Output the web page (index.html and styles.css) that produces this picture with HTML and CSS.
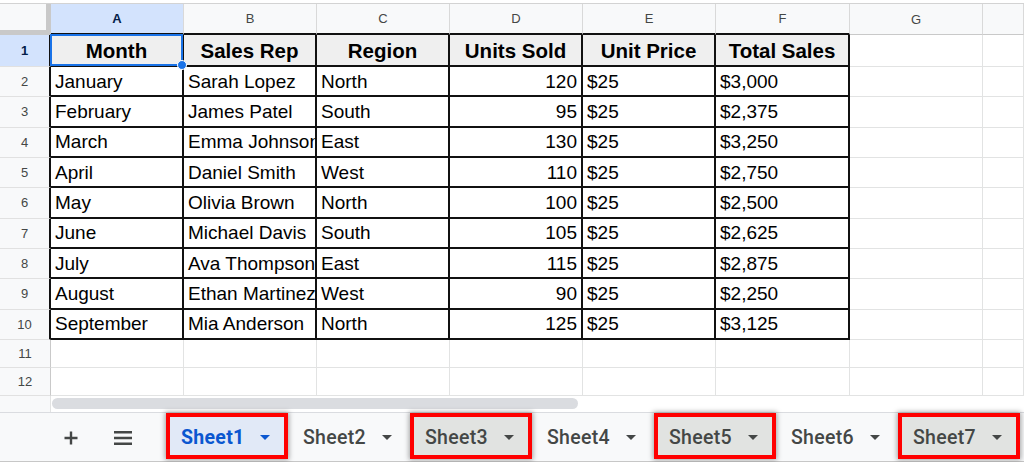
FILE: index.html
```html
<!DOCTYPE html>
<html lang="en">
<head>
<meta charset="utf-8">
<title>Sales Sheet</title>
<link rel="stylesheet" href="styles.css">
</head>
<body>
<div class="app">
  <div class="sheet">
    <div class="corner"></div>
    <div class="ch ct selcol">A</div>
    <div class="ch ct">B</div>
    <div class="ch ct">C</div>
    <div class="ch ct">D</div>
    <div class="ch ct">E</div>
    <div class="ch ct">F</div>
    <div class="ch">G</div>
    <div class="ch"></div>

    <div class="rh rt selrow">1</div>
    <div class="c t hd a1">Month<span class="sel"><span class="dot"></span></span></div>
    <div class="c t hd">Sales Rep</div>
    <div class="c t hd">Region</div>
    <div class="c t hd">Units Sold</div>
    <div class="c t hd">Unit Price</div>
    <div class="c t hd">Total Sales</div>
    <div class="c"></div><div class="c"></div>

    <div class="rh rt">2</div>
    <div class="c t">January</div><div class="c t">Sarah Lopez</div><div class="c t">North</div><div class="c t num">120</div><div class="c t">$25</div><div class="c t">$3,000</div><div class="c"></div><div class="c"></div>

    <div class="rh rt">3</div>
    <div class="c t">February</div><div class="c t">James Patel</div><div class="c t">South</div><div class="c t num">95</div><div class="c t">$25</div><div class="c t">$2,375</div><div class="c"></div><div class="c"></div>

    <div class="rh rt">4</div>
    <div class="c t">March</div><div class="c t">Emma Johnson</div><div class="c t">East</div><div class="c t num">130</div><div class="c t">$25</div><div class="c t">$3,250</div><div class="c"></div><div class="c"></div>

    <div class="rh rt">5</div>
    <div class="c t">April</div><div class="c t">Daniel Smith</div><div class="c t">West</div><div class="c t num">110</div><div class="c t">$25</div><div class="c t">$2,750</div><div class="c"></div><div class="c"></div>

    <div class="rh rt">6</div>
    <div class="c t">May</div><div class="c t">Olivia Brown</div><div class="c t">North</div><div class="c t num">100</div><div class="c t">$25</div><div class="c t">$2,500</div><div class="c"></div><div class="c"></div>

    <div class="rh rt">7</div>
    <div class="c t">June</div><div class="c t">Michael Davis</div><div class="c t">South</div><div class="c t num">105</div><div class="c t">$25</div><div class="c t">$2,625</div><div class="c"></div><div class="c"></div>

    <div class="rh rt">8</div>
    <div class="c t">July</div><div class="c t">Ava Thompson</div><div class="c t">East</div><div class="c t num">115</div><div class="c t">$25</div><div class="c t">$2,875</div><div class="c"></div><div class="c"></div>

    <div class="rh rt">9</div>
    <div class="c t">August</div><div class="c t">Ethan Martinez</div><div class="c t">West</div><div class="c t num">90</div><div class="c t">$25</div><div class="c t">$2,250</div><div class="c"></div><div class="c"></div>

    <div class="rh rt">10</div>
    <div class="c t">September</div><div class="c t">Mia Anderson</div><div class="c t">North</div><div class="c t num">125</div><div class="c t">$25</div><div class="c t">$3,125</div><div class="c"></div><div class="c"></div>

    <div class="rh">11</div>
    <div class="c"></div><div class="c"></div><div class="c"></div><div class="c"></div><div class="c"></div><div class="c"></div><div class="c"></div><div class="c"></div>

    <div class="rh">12</div>
    <div class="c"></div><div class="c"></div><div class="c"></div><div class="c"></div><div class="c"></div><div class="c"></div><div class="c"></div><div class="c"></div>
  </div>

  <div class="hscroll">
    <div class="hs-left"></div>
    <div class="hs-track"><div class="thumb"></div></div>
  </div>

  <div class="tabbar">
    <div class="iconbtn">
      <svg width="16" height="16" viewBox="0 0 16 16"><path d="M8 1.5v13M1.5 8h13" stroke="#444746" stroke-width="2.4" fill="none"/></svg>
    </div>
    <div class="iconbtn menu">
      <svg width="18" height="14" viewBox="0 0 18 14"><path d="M0 1.2h18M0 7h18M0 12.8h18" stroke="#444746" stroke-width="2.4" fill="none"/></svg>
    </div>
    <div class="tabs">
      <div class="tab active marked"><span class="label">Sheet1</span><svg class="caret" width="10" height="5" viewBox="0 0 10 5"><path d="M0 0h10L5 5z" fill="currentColor"/></svg></div>
      <div class="tab"><span class="label">Sheet2</span><svg class="caret" width="10" height="5" viewBox="0 0 10 5"><path d="M0 0h10L5 5z" fill="currentColor"/></svg></div>
      <div class="tab picked marked"><span class="label">Sheet3</span><svg class="caret" width="10" height="5" viewBox="0 0 10 5"><path d="M0 0h10L5 5z" fill="currentColor"/></svg></div>
      <div class="tab"><span class="label">Sheet4</span><svg class="caret" width="10" height="5" viewBox="0 0 10 5"><path d="M0 0h10L5 5z" fill="currentColor"/></svg></div>
      <div class="tab picked marked"><span class="label">Sheet5</span><svg class="caret" width="10" height="5" viewBox="0 0 10 5"><path d="M0 0h10L5 5z" fill="currentColor"/></svg></div>
      <div class="tab"><span class="label">Sheet6</span><svg class="caret" width="10" height="5" viewBox="0 0 10 5"><path d="M0 0h10L5 5z" fill="currentColor"/></svg></div>
      <div class="tab picked marked"><span class="label">Sheet7</span><svg class="caret" width="10" height="5" viewBox="0 0 10 5"><path d="M0 0h10L5 5z" fill="currentColor"/></svg></div>
    </div>
  </div>
</div>
</body>
</html>
```

FILE: styles.css
```css
* { box-sizing: border-box; }

html, body {
  margin: 0;
  padding: 0;
  background: #ffffff;
}

.app {
  width: 1024px;
  height: 462px;
  overflow: hidden;
  padding-top: 3px;
  font-family: "Liberation Sans", Arial, sans-serif;
}

.sheet {
  display: grid;
  grid-template-columns: 51px 133px 133px 133px 133px 133px 134px 133px 1fr;
  grid-template-rows: 31px 32px repeat(9, 30.33px) 28px 28px;
  border-top: 1px solid #d3d3d3;
}

.corner {
  background: #f8f9fa;
  border-right: 5px solid #c9c9c9;
  border-bottom: 5px solid #c9c9c9;
}

.ch {
  display: flex;
  align-items: center;
  justify-content: center;
  font-size: 13px;
  color: #444746;
  background: #f8f9fa;
  border-right: 1px solid #d9d9d9;
  border-bottom: 1px solid #c9c9c9;
}

.ch.ct { border-bottom: 2px solid #111; }

.ch.selcol {
  background: #d3e3fd;
  color: #041e49;
  font-weight: bold;
}

.rh {
  display: flex;
  align-items: center;
  justify-content: center;
  font-size: 13px;
  color: #444746;
  background: #f8f9fa;
  border-right: 1px solid #c9c9c9;
  border-bottom: 1px solid #e1e1e1;
}

.rh.rt { border-right: 2px solid #111; }

.rh.selrow {
  background: #d3e3fd;
  color: #041e49;
  font-weight: bold;
}

.c {
  display: flex;
  align-items: center;
  padding: 1px 4px 0 4px;
  font-size: 19px;
  color: #000;
  white-space: nowrap;
  overflow: hidden;
  border-right: 1px solid #e2e3e3;
  border-bottom: 1px solid #e2e3e3;
}

.c.t {
  border-right: 2px solid #111;
  border-bottom: 2px solid #111;
}

.c.hd {
  background: #efefef;
  font-weight: bold;
  font-size: 20.5px;
  justify-content: center;
}

.c.num { justify-content: flex-end; }

.c.a1 {
  position: relative;
  overflow: visible;
}

.sel {
  position: absolute;
  left: -1px;
  top: -1px;
  right: -1px;
  bottom: -1px;
  border: 2px solid #1a73e8;
  z-index: 2;
}

.dot {
  position: absolute;
  right: -6px;
  bottom: -6px;
  width: 10px;
  height: 10px;
  border-radius: 50%;
  background: #1a73e8;
  border: 1px solid #ffffff;
}

.hscroll {
  display: flex;
  height: 16px;
}

.hs-left {
  width: 51px;
  border-right: 1px solid #e2e3e3;
  background: #f8f9fa;
}

.hs-track {
  flex: 1;
  padding: 2px 0 0 1px;
}

.thumb {
  width: 526px;
  height: 11px;
  border-radius: 6px;
  background: #dadce0;
}

.tabbar {
  display: flex;
  align-items: flex-start;
  height: 51px;
  background: #f8f9fa;
  border-top: 1px solid #dadce0;
  border-bottom: 2px solid #c7c7c7;
  padding-left: 56px;
}

.iconbtn {
  width: 30px;
  height: 50px;
  display: flex;
  align-items: center;
  justify-content: center;
}

.iconbtn.menu { margin-left: 22px; }

.tabs {
  display: flex;
  margin-left: 28px;
}

.tab {
  width: 122px;
  height: 46px;
  display: flex;
  align-items: center;
  padding: 3px 18px 0 15px;
  font-family: Roboto, "Noto Sans", sans-serif;
  font-size: 19.5px;
  font-weight: 500;
  letter-spacing: 0.3px;
  color: #444746;
}

.tab .caret { margin-left: auto; }

.tab.active {
  background: #e1e9f7;
  color: #0b57d0;
  font-weight: 700;
}

.tab.picked { background: #e1e3e1; }

.tab.marked {
  outline: 4px solid #ff0000;
  outline-offset: -4px;
  box-shadow: 0 0 5px 1px rgba(0, 0, 0, 0.35);
  position: relative;
  z-index: 1;
}
```
